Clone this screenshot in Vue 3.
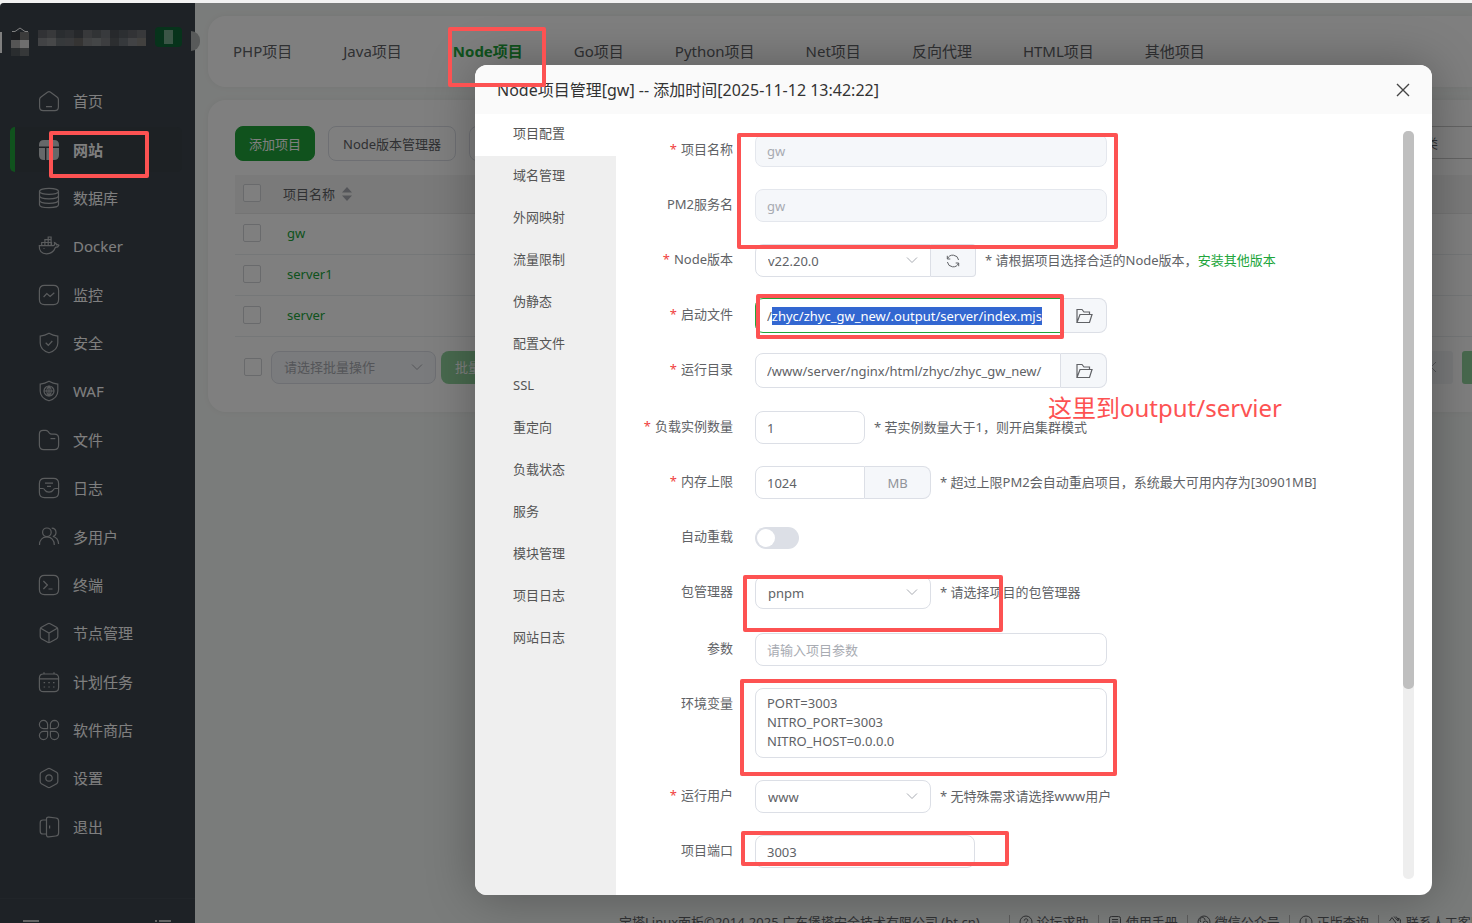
<script setup>
import { onMounted, ref } from 'vue'

const navItems = [
  { label: '首页', paths: ['M3 6.9 9.4 2.2q1.6-1.1 3.2 0L19 6.9q1.4 1 1.4 2.6V17q0 3.6-3.6 3.6H5.2Q1.6 20.6 1.6 17V9.500q0-1.600 1.400-2.600z', 'M8 16.600h6'] },
  { label: '网站', active: true, solid: true, paths: ['M1 7.500V6q0-5 5-5h10q5 0 5 5v1.500z', 'M1 9h6v12H6q-5 0-5-5z', 'M8.400 9h4.600v12H8.400z', 'M14.400 9H21v7q0 5-5 5h-1.600z'] },
  { label: '数据库', paths: ['M1.500 4.300c0-4 19-4 19 0s-19 4-19 0v13.400c0 4 19 4 19 0V4.300', 'M1.500 8.800c0 4 19 4 19 0', 'M1.500 13.300c0 4 19 4 19 0'] },
  { label: 'Docker', paths: ['M1.300 10.600h14c1.500-.2 1.600-1.700 1.200-3 1.400.5 2 1.300 2.100 2.200.9-.2 1.700 0 2.300.4-.5 1.600-1.700 2.100-3.400 2.100-1.500 4-4.500 6.500-9 6.500-5 0-7.600-3-7.200-8.200z', 'M3.700 10.300V7.500h9.800v2.800M6.900 10.300V4.700h3.300v5.600M10.200 4.700V2h2.900v8.300M6.900 4.700h6.200M5.500 13.500h1'] },
  { label: '监控', paths: ['M6.500 1.400h9q5.100 0 5.100 5.100v9q0 5.100-5.100 5.100h-9q-5.100 0-5.100-5.100v-9q0-5.100 5.100-5.100z', 'M5.600 13 8.800 9.500l3.300 3 4.200-3.800'] },
  { label: '安全', paths: ['M11 1.300q4 2.300 8.800 2.800V11q0 7-8.800 9.800Q2.200 18 2.200 11V4.100Q7 3.600 11 1.300z', 'm7.700 10.800 2.600 2.500 4-4.300'] },
  { label: 'WAF', paths: ['M11 1.300q4 2.300 8.800 2.800V11q0 7-8.800 9.800Q2.200 18 2.200 11V4.100Q7 3.600 11 1.300z', 'M6 11a5 5 0 1 0 10 0a5 5 0 1 0-10 0z', 'M6 11h10M11 6v10M11 6c-3 3-3 7 0 10M11 6c3 3 3 7 0 10'] },
  { label: '文件', paths: ['M1.400 5q0-3.700 3.700-3.700h2.500q1.500 0 2.400 1.200l1.400 1.700q.9 1 2.300 1h2.700q4.200 0 4.200 4v7q0 4.400-4.400 4.400H5.800q-4.400 0-4.400-4.400z', 'M12.500 9.600h4.800'] },
  { label: '日志', paths: ['M6.500 1.400h9q5.100 0 5.100 5.100v9q0 5.100-5.100 5.100h-9q-5.100 0-5.100-5.100v-9q0-5.100 5.100-5.100z', 'M1.400 11.500h3.200q1.500 0 2.300 1.600 1.200 2 4.100 2t4.100-2q.8-1.600 2.300-1.600h3.200', 'M7 6.200h8M9 9.300h4'] },
  { label: '多用户', paths: ['M4.600 6.300a4.300 4.300 0 1 0 8.600 0a4.300 4.300 0 1 0-8.600 0z', 'M1.500 19c0-5 3-8.100 7.400-8.100s7.400 3.100 7.400 8.100', 'M13.700 2.200c5.500.2 5.500 7.200 1.200 8.300 3.400.7 5.500 3.500 5.700 7.500'] },
  { label: '终端', paths: ['M6.500 1.400h9q5.100 0 5.100 5.100v9q0 5.100-5.100 5.100h-9q-5.100 0-5.100-5.100v-9q0-5.100 5.100-5.100z', 'm5.400 7 4 4-4 4M10.500 15h4'] },
  { label: '节点管理', paths: ['M9.800 1.700q1.200-.7 2.400 0l6.400 3.600q1.200.7 1.200 2.100v7.200q0 1.400-1.200 2.100l-6.400 3.600q-1.200.7-2.400 0l-6.400-3.600q-1.200-.7-1.200-2.100V7.400q0-1.400 1.200-2.100z', 'm2.700 6.300 8.300 4.800 8.300-4.800M11 11.100v9.500'] },
  { label: '计划任务', paths: ['M5.500 3h11q4.100 0 4.100 4.100v9.400q0 4.100-4.100 4.100h-11q-4.100 0-4.100-4.100V7.100Q1.400 3 5.500 3z', 'M1.400 7.800h19.200M6 1.200V3M16 1.200V3', 'M5.600 11.700h1.500M10.300 11.700h1.500M15 11.700h1.500M5.600 16h1.500M10.300 16h1.500M15 16h1.500'] },
  { label: '软件商店', paths: ['M5.500 1.400a4.100 4.100 0 0 0 0 8.200h4.100V5.500a4.100 4.100 0 0 0-4.100-4.100z', 'M16.500 1.400a4.100 4.100 0 0 1 0 8.200h-4.100V5.500a4.100 4.100 0 0 1 4.100-4.100z', 'M5.500 20.600a4.100 4.100 0 0 1 0-8.200h4.100v4.100a4.100 4.100 0 0 1-4.100 4.100z', 'M16.500 20.600a4.100 4.100 0 0 0 0-8.200h-4.100v4.100a4.100 4.100 0 0 0 4.100 4.100z'] },
  { label: '设置', paths: ['M9.800 1.700q1.200-.7 2.400 0l6.400 3.600q1.200.7 1.200 2.100v7.200q0 1.400-1.200 2.100l-6.400 3.600q-1.200.7-2.400 0l-6.400-3.600q-1.200-.7-1.200-2.100V7.400q0-1.400 1.200-2.100z', 'M7.800 11a3.200 3.200 0 1 0 6.400 0a3.200 3.200 0 1 0-6.400 0z'] },
  { label: '退出', paths: ['M8.500 3.200q0-2.300 2.400-2l7 .8q2.700.3 2.700 3v12q0 2.700-2.700 3l-7 .8q-2.400.3-2.400-2z', 'M8.500 4H5Q2.200 4 2.200 6.800v8.400Q2.200 18 5 18h3.500', 'M11.600 9.500v3'] },
]

const tabs = ['PHP项目', 'Java项目', 'Node项目', 'Go项目', 'Python项目', 'Net项目', '反向代理', 'HTML项目', '其他项目']
const projects = ['gw', 'server1', 'server']
const menu = ['项目配置', '域名管理', '外网映射', '流量限制', '伪静态', '配置文件', 'SSL', '重定向', '负载状态', '服务', '模块管理', '项目日志', '网站日志']

const footerLinks = [
  { label: '论坛求助', paths: ['M1 7a6 6 0 1 0 12 0a6 6 0 1 0-12 0z', 'M5.200 5.600c.2-2.500 3.600-2.200 3.600-.3 0 1.300-1.800 1.300-1.800 2.700M7 9.500v1'] },
  { label: '使用手册', paths: ['M3.500 1.500h7q2 0 2 2v7q0 2-2 2h-7q-2 0-2-2v-7q0-2 2-2z', 'M4 4.500h6M4 7h6M4 9.500h3'] },
  { label: '微信公众号', paths: ['M1 7a6 6 0 1 0 12 0a6 6 0 1 0-12 0z', 'M4 7a2.500 2.500 0 1 1 4-2M6 8.500a2.500 2.500 0 1 0 5 0a2.500 2.500 0 1 0-5 0z'] },
  { label: '正版查询', paths: ['M1 7a6 6 0 1 0 12 0a6 6 0 1 0-12 0z', 'M7 3.500v5M7 9.500v1'] },
  { label: '联系人工客服', paths: ['M1.500 6 4 2.500 8 8M3 8l3.500 4.500q4 1 5.500-2L12.500 5l-2-2-.5 3-4-4.500M8 1.500l3 4'] },
]

const logoCells = ['#393d42', '#777', '#aaa', '#ddd', '#555a5e', '#6d7072']
const nameCells = [
  '#62656b', '#707277', '#555a60', '#5c6167', '#4c5157', '#707276', '#63676b', '#70757a', '#4e5359', '#585e64', '#64676c', '#707277',
  '#85878a', '#8f9092', '#6d7377', '#707276', '#6b6866', '#828487', '#898c8f', '#7a7d80', '#585c60', '#6c7378', '#85868a', '#85827e',
]

const form = ref({
  name: 'gw',
  pm2: 'gw',
  node: 'v22.20.0',
  file: '/zhyc/zhyc_gw_new/.output/server/index.mjs',
  dir: '/www/server/nginx/html/zhyc/zhyc_gw_new/',
  instances: '1',
  memory: '1024',
  reload: false,
  manager: 'pnpm',
  params: '',
  env: 'PORT=3003\nNITRO_PORT=3003\nNITRO_HOST=0.0.0.0',
  user: 'www',
  port: '3003',
})

const fileInput = ref(null)

onMounted(() => {
  const el = fileInput.value
  el.focus({ preventScroll: true })
  el.setSelectionRange(form.value.file.indexOf('zhyc/'), form.value.file.length)
  el.scrollLeft = el.scrollWidth
})
</script>

<template>
  <div class="app">
    <div class="shell">
      <aside class="sidebar">
        <header class="brand">
          <span class="edge"></span>
          <span class="logo">
            <svg class="roof" viewBox="0 0 18 5"><path d="M1 4.500h3l5-3.500 5 3.500h3" /></svg>
            <span class="logo-cells"><i v-for="(c, i) in logoCells" :key="i" :style="{ background: c }"></i></span>
          </span>
          <span class="host"><i v-for="(c, i) in nameCells" :key="i" :style="{ background: c }"></i></span>
          <span class="count"><i></i></span>
        </header>
        <nav class="nav">
          <a v-for="item in navItems" :key="item.label" href="#" class="nav-item" :class="{ active: item.active }">
            <svg class="nav-icon" :class="{ solid: item.solid }" viewBox="0 0 22 22">
              <path v-for="d in item.paths" :key="d" :d="d" />
            </svg>
            <span>{{ item.label }}</span>
          </a>
        </nav>
        <footer class="side-foot">
          <svg viewBox="0 0 16 14"><path d="M0 1h16M0 7h16M0 13h16" /></svg>
          <svg viewBox="0 0 16 14"><path d="M0 1h2M4 1h12M0 7h2M4 7h12M0 13h2M4 13h12" /></svg>
        </footer>
      </aside>
      <span class="collapse"></span>

      <main class="main">
        <nav class="card tabs">
          <a v-for="t in tabs" :key="t" href="#" class="tab" :class="{ active: t === 'Node项目' }">{{ t }}</a>
        </nav>

        <section class="card list">
          <div class="toolbar">
            <button class="btn primary">添加项目</button>
            <button class="btn">Node版本管理器</button>
            <button class="btn">设置</button>
            <select class="category" aria-label="分类"><option>分类</option></select>
          </div>
          <table class="table">
            <thead>
              <tr>
                <th class="check"><input type="checkbox" aria-label="全选" /></th>
                <th>
                  <span class="sortable">项目名称
                    <svg class="sort" viewBox="0 0 10 14"><path d="M0 5.500 5 0l5 5.500zM0 8.500h10L5 14z" /></svg>
                  </span>
                </th>
              </tr>
            </thead>
            <tbody>
              <tr v-for="p in projects" :key="p">
                <td class="check"><input type="checkbox" :aria-label="p" /></td>
                <td><a href="#">{{ p }}</a></td>
              </tr>
            </tbody>
          </table>
          <div class="batch">
            <input type="checkbox" aria-label="批量选择" />
            <span class="select-wrap batch-select">
              <select aria-label="批量操作" disabled><option>请选择批量操作</option></select>
              <svg class="chevron" viewBox="0 0 12 12"><path d="m1 3.500 5 5 5-5" /></svg>
            </span>
            <button class="batch-btn">批量操作</button>
            <span class="pager">
              <button class="prev" aria-label="上一页"><svg viewBox="0 0 12 12"><path d="m8 1-5 5 5 5" /></svg></button>
              <button class="page" aria-label="第一页"></button>
            </span>
          </div>
        </section>

        <footer class="footer">
          <span class="copy">宝塔Linux面板©2014-2025 广东堡塔安全技术有限公司 (bt.cn)</span>
          <a v-for="l in footerLinks" :key="l.label" href="#">
            <svg viewBox="0 0 14 14"><path v-for="d in l.paths" :key="d" :d="d" /></svg>{{ l.label }}
          </a>
        </footer>
      </main>

      <div class="overlay">
        <section class="modal" role="dialog" aria-labelledby="modal-title">
          <header class="modal-head">
            <h1 id="modal-title">Node项目管理[gw] -- 添加时间[2025-11-12 13:42:22]</h1>
            <button class="close" aria-label="关闭"><svg viewBox="0 0 14 14"><path d="m1 1 12 12M13 1 1 13" /></svg></button>
          </header>
          <div class="modal-body">
            <nav class="menu">
              <a v-for="(m, i) in menu" :key="m" href="#" :class="{ active: i === 0 }">{{ m }}</a>
            </nav>
            <form class="form" @submit.prevent>
              <div class="group">
                <div class="row">
                  <label class="required" for="f-name">项目名称</label>
                  <input id="f-name" v-model="form.name" class="field wide" disabled />
                </div>
                <div class="row">
                  <label for="f-pm2">PM2服务名</label>
                  <input id="f-pm2" v-model="form.pm2" class="field wide" disabled />
                </div>
                <div class="row">
                  <label class="required" for="f-node">Node版本</label>
                  <div class="joined">
                    <span class="select-wrap">
                      <select id="f-node" v-model="form.node"><option>v22.20.0</option></select>
                      <svg class="chevron" viewBox="0 0 12 12"><path d="m1 3.500 5 5 5-5" /></svg>
                    </span>
                    <button type="button" class="append small" aria-label="刷新">
                      <svg class="refresh" viewBox="0 0 14 14"><path d="M1.300 5V1.800M1.300 5h3M1.500 4.800A5.800 5.800 0 0 1 12.600 6M12.700 9v3.200M12.700 9h-3M12.500 9.200A5.800 5.800 0 0 1 1.400 8" /></svg>
                    </button>
                  </div>
                  <span class="hint">* 请根据项目选择合适的Node版本，<a href="#">安装其他版本</a></span>
                </div>
                <div class="row">
                  <label class="required" for="f-file">启动文件</label>
                  <div class="joined wide path">
                    <input id="f-file" ref="fileInput" v-model="form.file" class="field" />
                    <button type="button" class="append" aria-label="选择启动文件">
                      <svg class="folder" viewBox="0 0 18 16"><path d="M2 14.500V1.500h5l2 2.500h5.500v2.500M2 14.500 5 6.500h12l-2.500 8z" /></svg>
                    </button>
                  </div>
                </div>
                <div class="row">
                  <label class="required" for="f-dir">运行目录</label>
                  <div class="joined wide path">
                    <input id="f-dir" v-model="form.dir" class="field" />
                    <button type="button" class="append" aria-label="选择运行目录">
                      <svg class="folder" viewBox="0 0 18 16"><path d="M2 14.500V1.500h5l2 2.500h5.500v2.500M2 14.500 5 6.500h12l-2.500 8z" /></svg>
                    </button>
                  </div>
                </div>
              </div>

              <div class="group">
                <div class="row">
                  <label class="required" for="f-inst">负载实例数量</label>
                  <input id="f-inst" v-model="form.instances" class="field short" />
                  <span class="hint">* 若实例数量大于1，则开启集群模式</span>
                </div>
                <div class="row">
                  <label class="required" for="f-mem">内存上限</label>
                  <div class="joined medium">
                    <input id="f-mem" v-model="form.memory" class="field" />
                    <span class="append unit">MB</span>
                  </div>
                  <span class="hint">* 超过上限PM2会自动重启项目，系统最大可用内存为[30901MB]</span>
                </div>
                <div class="row">
                  <label for="f-reload">自动重载</label>
                  <input id="f-reload" v-model="form.reload" type="checkbox" role="switch" class="switch" />
                </div>
                <div class="row">
                  <label for="f-mgr">包管理器</label>
                  <span class="select-wrap">
                    <select id="f-mgr" v-model="form.manager"><option>pnpm</option></select>
                    <svg class="chevron" viewBox="0 0 12 12"><path d="m1 3.500 5 5 5-5" /></svg>
                  </span>
                  <span class="hint">* 请选择项目的包管理器</span>
                </div>
              </div>

              <div class="group">
                <div class="row">
                  <label for="f-params">参数</label>
                  <input id="f-params" v-model="form.params" class="field wide" placeholder="请输入项目参数" />
                </div>
                <div class="row top">
                  <label for="f-env">环境变量</label>
                  <textarea id="f-env" v-model="form.env" class="field wide" rows="3"></textarea>
                </div>
                <div class="row">
                  <label class="required" for="f-user">运行用户</label>
                  <span class="select-wrap">
                    <select id="f-user" v-model="form.user"><option>www</option></select>
                    <svg class="chevron" viewBox="0 0 12 12"><path d="m1 3.500 5 5 5-5" /></svg>
                  </span>
                  <span class="hint">* 无特殊需求请选择www用户</span>
                </div>
                <div class="row">
                  <label for="f-port">项目端口</label>
                  <input id="f-port" v-model="form.port" class="field port" />
                </div>
              </div>
            </form>
            <div class="scrollbar"><span></span></div>
          </div>
        </section>
      </div>
    </div>

    <div class="mark mark-nav"></div>
    <div class="mark mark-tab"></div>
    <div class="mark mark-names"></div>
    <div class="mark mark-file"></div>
    <div class="mark mark-manager"></div>
    <div class="mark mark-env"></div>
    <div class="mark mark-port"></div>
    <p class="note">这里到output/servier</p>
  </div>
</template>

<style>
body {
  margin: 0;
  background: #f2f2f2;
}
</style>

<style scoped>
.app,
.app * {
  box-sizing: border-box;
}
.app {
  position: relative;
  height: 100vh;
  padding-top: 3px;
  overflow: hidden;
  background: #f2f2f2;
  font-family: "Noto Sans", "Noto Sans CJK SC", sans-serif;
  font-size: 13px;
  line-height: 20px;
  color: #606266;
}
a {
  color: inherit;
  text-decoration: none;
}
button,
input,
select,
textarea {
  margin: 0;
  font: inherit;
  color: inherit;
}
svg {
  display: block;
  flex: none;
  fill: none;
  stroke: currentColor;
}
.shell {
  position: relative;
  display: flex;
  height: 100%;
  overflow: hidden;
  border-top-left-radius: 4px;
  background: #f5f8f6;
}

/* Sidebar */
.sidebar {
  display: flex;
  flex-direction: column;
  flex: none;
  width: 195px;
  background: #3c444c;
  color: #fff;
}
.brand {
  display: flex;
  align-items: flex-start;
  height: 74px;
  padding-top: 24px;
}
.edge {
  width: 2px;
  height: 21px;
  margin: 5px 9px 0 0;
  background: #fff;
}
.logo {
  width: 18px;
}
.roof {
  width: 18px;
  height: 5px;
}
.logo-cells {
  display: grid;
  grid-template-columns: 9px 9px;
  grid-auto-rows: 8px;
}
.host {
  display: grid;
  grid-template-columns: repeat(12, 9px);
  grid-auto-rows: 8px;
  margin: 3px 9px 0;
}
.count {
  display: flex;
  justify-content: center;
  align-items: center;
  width: 27px;
  height: 20px;
  border-radius: 4px;
  background: #0e6636;
}
.count i {
  width: 9px;
  height: 14px;
  background: #77aa8c;
}
.nav {
  display: grid;
  grid-auto-rows: 1fr;
  flex: 1;
  margin-bottom: 47px;
  padding: 0 13px 0 10px;
}
.nav-item {
  display: flex;
  align-items: center;
  gap: 13px;
  margin: 2px 0;
  padding-left: 23px;
  border-left: 5px solid transparent;
  border-radius: 5px;
  font-size: 15px;
}
.nav-item.active {
  border-left-color: #20a53a;
  background: #3a4249;
  font-weight: 700;
}
.nav-icon {
  width: 22px;
  height: 22px;
  color: #b4b8bb;
  stroke-width: 1.2;
}
.nav-icon.solid {
  fill: #cdd0d2;
  stroke: none;
}
.side-foot {
  display: flex;
  justify-content: space-between;
  height: 25px;
  padding: 21px 24px 0 23px;
  overflow: hidden;
  border-top: 1px solid #434b53;
  color: #c8c8c8;
}
.side-foot svg {
  width: 16px;
  height: 14px;
  stroke-width: 2;
}
.collapse {
  position: absolute;
  left: 191px;
  top: 28px;
  width: 9px;
  height: 20px;
  border-radius: 0 10px 10px 0;
  background: #b0b4b4;
}

/* Page content */
.main {
  display: flex;
  flex-direction: column;
  flex: 1;
  min-width: 0;
  padding: 13px 0 0 13px;
}
.card {
  margin-bottom: 13px;
  border-radius: 18px 0 0 18px;
  background: #fff;
  box-shadow: 0 0 6px rgba(0, 0, 0, 0.05);
}
.tabs {
  display: flex;
  align-items: center;
  gap: 51px;
  height: 71px;
  padding: 0 0 2px 25px;
  overflow: hidden;
  font-size: 15px;
  white-space: nowrap;
}
.tab.active {
  color: #20a53a;
  font-weight: 700;
}
.list {
  padding: 26px 0 28px 27px;
}
.toolbar {
  display: flex;
  gap: 13px;
  margin-bottom: 14px;
}
.btn {
  height: 35px;
  padding: 0 14px;
  border: 1px solid #dcdfe6;
  border-radius: 8px;
  background: #fff;
}
.btn.primary {
  padding: 0 13px;
  border-color: #20a53a;
  background: #20a53a;
  color: #fff;
}
.category {
  width: 73px;
  height: 33px;
  margin-left: auto;
  padding: 0 12px;
  border: 1px solid #c8c8c8;
  border-right: 0;
  appearance: none;
  background: #fff;
}
.table {
  width: 100%;
  border-collapse: collapse;
  text-align: left;
}
.table th {
  height: 38px;
  padding: 0 12px;
  border-bottom: 1px solid #e8e8e8;
  background: #f4f4f4;
  font-weight: 400;
}
.table td {
  height: 41px;
  padding: 0 16px 2px;
  border-bottom: 1px solid #ebeef0;
  color: #20a53a;
}
.table .check {
  width: 36px;
  padding: 0 8px 2px;
}
.table input,
.batch > input {
  display: block;
  width: 18px;
  height: 18px;
  border: 1px solid #d2d4d8;
  border-radius: 2px;
  appearance: none;
  background: #fff;
}
.sortable {
  display: flex;
  align-items: center;
  gap: 7px;
}
.sort {
  width: 10px;
  height: 14px;
  fill: #a8abb2;
  stroke: none;
}
.batch {
  display: flex;
  align-items: center;
  margin-top: 14px;
  padding-left: 9px;
}
.select-wrap.batch-select {
  width: 165px;
  margin: 0 5px 0 9px;
}
.select-wrap.batch-select select {
  background: #f5f7fa;
  color: #a8abb2;
  opacity: 1;
}
.batch-btn {
  height: 33px;
  padding: 0 14px;
  border: 0;
  border-radius: 8px;
  background: #90d29d;
  color: #fff;
}
.pager {
  display: flex;
  gap: 9px;
  margin-left: auto;
}
.prev,
.page {
  height: 33px;
  padding: 0;
  border: 0;
  border-radius: 3px;
  background: #f2f4f7;
  color: #a8abb2;
}
.prev {
  width: 37px;
  padding-left: 12px;
}
.prev svg {
  width: 12px;
  height: 12px;
}
.page {
  width: 10px;
  border-radius: 3px 0 0 3px;
  background: #90d29d;
}
.footer {
  display: flex;
  align-items: center;
  margin: auto 0 -9px;
  padding-left: 411px;
  overflow: hidden;
  white-space: nowrap;
}
.copy {
  margin-right: 29px;
}
.footer a {
  display: flex;
  align-items: center;
  gap: 4px;
  height: 14px;
  padding: 0 9px;
  border-left: 1px solid #bbb;
}
.footer svg {
  width: 14px;
  height: 14px;
}

/* Dialog */
.overlay {
  position: absolute;
  inset: 0;
  display: flex;
  padding: 62px 40px 28px 475px;
  background: rgba(0, 0, 0, 0.5);
}
.modal {
  display: flex;
  flex-direction: column;
  flex: 1;
  min-width: 0;
  overflow: hidden;
  border-radius: 12px;
  background: #fff;
  box-shadow: 1px 1px 50px rgba(0, 0, 0, 0.3);
}
.modal-head {
  display: flex;
  align-items: center;
  justify-content: space-between;
  flex: none;
  height: 49px;
  padding: 0 22px;
  background: #fafafa;
  color: #333;
}
.modal-head h1 {
  margin: 0;
  font-size: 16px;
  font-weight: 400;
  white-space: nowrap;
}
.close {
  padding: 0;
  border: 0;
  background: none;
  color: #444;
}
.close svg {
  width: 14px;
  height: 14px;
  stroke-width: 1.4;
}
.modal-body {
  display: flex;
  flex: 1;
  min-height: 0;
}
.menu {
  flex: none;
  width: 141px;
  background: #efefef;
}
.menu a {
  display: block;
  padding-left: 38px;
  line-height: 38px;
  height: 42px;
  color: #555;
}
.menu a.active {
  background: #fff;
}
.form {
  display: flex;
  flex-direction: column;
  flex: 1;
  gap: 24px;
  min-width: 0;
  padding-top: 20px;
}
.group {
  display: flex;
  flex-direction: column;
  gap: 22px;
}
.row {
  display: flex;
  align-items: center;
  min-height: 33px;
  white-space: nowrap;
}
.row.top {
  align-items: flex-start;
}
.row label {
  flex: none;
  width: 117px;
  margin-right: 22px;
  line-height: 31px;
  padding-bottom: 2px;
  text-align: right;
}
.required::before {
  content: "*";
  margin-right: 4px;
  color: #f04040;
}
.field,
.select-wrap select {
  display: block;
  height: 33px;
  padding: 0 11px;
  border: 1px solid #dcdfe6;
  border-radius: 8px;
  outline: 0;
  background: #fff;
}
.field {
  min-width: 0;
}
.field:disabled {
  border-color: #e4e7ed;
  background: #f5f7fa;
  color: #a8abb2;
}
.field::placeholder {
  color: #a8abb2;
}
.field::selection {
  background: #3367d1;
  color: #fff;
}
.wide {
  width: 352px;
}
.short {
  width: 110px;
}
.medium {
  width: 176px;
}
.port {
  width: 220px;
}
textarea.field {
  height: 70px;
  padding: 5px 11px;
  line-height: 19px;
  resize: none;
}
.select-wrap {
  position: relative;
  display: block;
  flex: none;
  width: 176px;
}
.select-wrap select {
  width: 100%;
  padding: 0 12px;
  appearance: none;
}
.chevron {
  position: absolute;
  right: 13px;
  top: 10px;
  width: 12px;
  height: 12px;
  color: #a8abb2;
  pointer-events: none;
}
.joined {
  display: flex;
  flex: none;
}
.joined .field {
  flex: 1;
}
.joined .field,
.joined select {
  border-radius: 8px 0 0 8px;
}
.path {
  margin: -1px 0;
}
.path .field,
.path .append {
  height: 35px;
}
.path .field:focus {
  border-color: #20a53a;
  caret-color: transparent;
}
.append {
  display: flex;
  flex: none;
  align-items: center;
  justify-content: center;
  width: 46px;
  height: 33px;
  padding: 0;
  border: 1px solid #dcdfe6;
  border-left: 0;
  border-radius: 0 8px 8px 0;
  background: #f5f7fa;
}
.append.small {
  width: 45px;
  border-radius: 0 4px 4px 0;
}
.append.unit {
  width: 66px;
  color: #909399;
}
.refresh {
  width: 14px;
  height: 14px;
}
.folder {
  width: 18px;
  height: 16px;
  stroke-width: 1.2;
}
.hint {
  margin-left: 9px;
  padding-bottom: 2px;
}
.hint a {
  color: #20a53a;
}
.switch {
  display: flex;
  align-items: center;
  width: 44px;
  height: 22px;
  padding: 2px;
  border-radius: 11px;
  appearance: none;
  background: #dcdfe6;
}
.switch::before {
  content: "";
  width: 18px;
  height: 18px;
  border-radius: 50%;
  background: #fff;
}
.scrollbar {
  flex: none;
  width: 11px;
  margin: 17px 18px 16px 0;
  border-radius: 5px;
  background: #eee;
}
.scrollbar span {
  display: block;
  height: 558px;
  border-radius: 5px;
  background: #bfbfbf;
}

/* Annotations drawn over the page */
.mark {
  position: absolute;
  border: 4px solid #fd5252;
  border-radius: 2px;
  pointer-events: none;
}
.mark-nav {
  left: 49px;
  top: 131px;
  width: 100px;
  height: 47px;
}
.mark-tab {
  left: 448px;
  top: 27px;
  width: 98px;
  height: 60px;
}
.mark-names {
  left: 737px;
  top: 133px;
  width: 381px;
  height: 116px;
}
.mark-file {
  left: 756px;
  top: 294px;
  width: 308px;
  height: 45px;
}
.mark-manager {
  left: 743px;
  top: 575px;
  width: 260px;
  height: 57px;
}
.mark-env {
  left: 740px;
  top: 679px;
  width: 377px;
  height: 97px;
}
.mark-port {
  left: 741px;
  top: 831px;
  width: 268px;
  height: 35px;
}
.note {
  position: absolute;
  left: 1048px;
  top: 392px;
  margin: 0;
  color: #fd5252;
  font-size: 24px;
  line-height: 32px;
  white-space: nowrap;
}
</style>
